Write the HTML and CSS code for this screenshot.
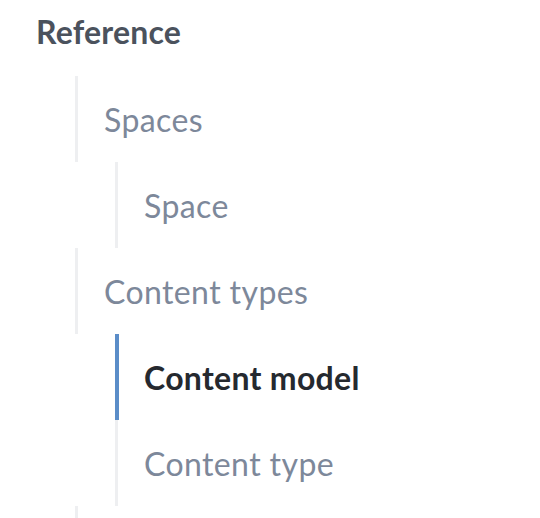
FILE: index.html
```html
<!DOCTYPE html>
<html>
<head>
<meta charset="utf-8">
<link rel="stylesheet" href="styles.css">
</head>
<body>
<nav class="nav">
  <h2 class="nav-title">Reference</h2>
  <ul class="nav-list">
    <li>
      <a class="nav-link">Spaces</a>
      <ul class="nav-sub">
        <li><a class="nav-link">Space</a></li>
      </ul>
    </li>
    <li>
      <a class="nav-link">Content types</a>
      <ul class="nav-sub">
        <li><a class="nav-link active">Content model</a></li>
        <li><a class="nav-link">Content type</a></li>
      </ul>
    </li>
    <li>
      <span class="nav-link nav-link-next"></span>
    </li>
  </ul>
</nav>
</body>
</html>
```

FILE: styles.css
```css
html, body {
  margin: 0;
  padding: 0;
  background: #ffffff;
}
body {
  font-family: Lato, "Noto Sans", sans-serif;
  width: 540px;
  height: 518px;
  overflow: hidden;
}
.nav {
  padding: 11px 0 0 36px;
}
.nav-title {
  margin: 0;
  font-size: 32px;
  line-height: 42px;
  font-weight: 700;
  letter-spacing: 0.2px;
  color: #4b525d;
}
.nav-list, .nav-sub {
  list-style: none;
  margin: 0;
  padding: 0;
}
.nav-list {
  margin: 23px 0 0 39px;
}
.nav-sub {
  margin-left: 40px;
}
.nav-link {
  display: flex;
  align-items: center;
  height: 86px;
  padding-left: 26px;
  border-left: 3px solid #eeeff1;
  font-size: 32px;
  letter-spacing: 0.4px;
  color: #7d889a;
  box-sizing: border-box;
}
.nav-link.active {
  border-left: 4px solid #5b8dc8;
  padding-left: 25px;
  color: #25292f;
  font-weight: 700;
  letter-spacing: 0.3px;
}
```
